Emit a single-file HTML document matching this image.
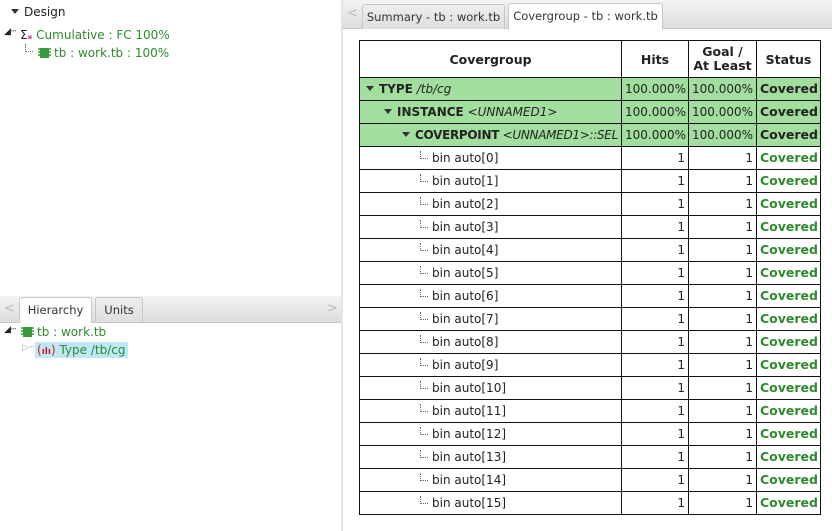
<!DOCTYPE html>
<html><head><meta charset="utf-8"><style>
*{box-sizing:border-box;margin:0;padding:0}
body{width:832px;height:531px;background:#fff;font-family:"DejaVu Sans","Liberation Sans",sans-serif;font-size:12px;color:#222;position:relative;overflow:hidden}
.a{position:absolute;white-space:nowrap}
.g{color:#2e8b2e}
.tabbar{position:absolute;background:linear-gradient(#f4f4f4,#dcdcdc);border-bottom:1px solid #c8c8c8}
.tab{position:absolute;border:1px solid #c8c8c8;border-bottom:none;border-radius:3px 3px 0 0;background:linear-gradient(#eee,#dedede);font-size:11.5px;padding-top:5px;text-align:center;color:#333}
.tab.on{background:#fff}
table{position:absolute;left:359px;top:40px;border-collapse:collapse;width:461px;table-layout:fixed}
td{border:1.5px solid #111;height:23px;padding:0 3px 1px;white-space:nowrap;overflow:hidden}
th{border:1.5px solid #111;height:37px;font-weight:bold;font-size:12.5px}
.gr td{background:#a2df9f}
.r{text-align:right}
.cov{font-weight:bold;color:#2e8b2e;font-size:12.5px}
.gr .cov{color:#222}
.tri{display:inline-block;width:0;height:0;border-left:4px solid transparent;border-right:4px solid transparent;border-top:5px solid #333;margin-right:5px;vertical-align:2px}
.dots{display:inline-block;width:8px;height:8px;border-left:1px dotted #666;border-bottom:1px dotted #666;margin-right:4px;vertical-align:1px;position:relative;top:-2px}
.chip{vertical-align:-2px;margin-right:3px}
</style></head><body>
<div class="a" style="left:11px;top:5px"><span class="tri"></span>Design</div>
<div class="a" style="left:4px;top:27px;font-size:9px">◢┄</div>
<div class="a g" style="left:20px;top:28px"><span style="color:#222">Σ</span><span style="font-size:7px;color:#c6a">▪</span> Cumulative : FC 100%</div>
<div class="a" style="left:25px;top:44px"><span class="dots"></span></div>
<div class="a g" style="left:38px;top:46px"><svg class="chip" width="13" height="12" viewBox="0 0 13 12"><rect x="2" y="1" width="9" height="10" fill="#3a9a3a"/><path d="M0 2h13M0 5h13M0 8h13" stroke="#3a9a3a" stroke-width="1.5"/></svg>tb : work.tb : 100%</div>
<div class="tabbar" style="left:0;top:296px;width:341px;height:27px"></div>
<div class="a" style="left:4px;top:301px;color:#bbb;font-size:13px">&lt;</div>
<div class="a" style="left:327px;top:301px;color:#bbb;font-size:13px">&gt;</div>
<div class="tab on" style="left:19px;top:297px;width:73px;height:26px">Hierarchy</div>
<div class="tab" style="left:95px;top:297px;width:48px;height:25px">Units</div>
<div class="a" style="left:4px;top:325px;font-size:9px">◢┄</div>
<div class="a g" style="left:21px;top:325px"><svg class="chip" width="13" height="12" viewBox="0 0 13 12"><rect x="2" y="1" width="9" height="10" fill="#3a9a3a"/><path d="M0 2h13M0 5h13M0 8h13" stroke="#3a9a3a" stroke-width="1.5"/></svg>tb : work.tb</div>
<div class="a" style="left:22px;top:343px;color:#aaa;font-size:9px">▷┄</div>
<div class="a g" style="left:35px;top:342px;background:#bfe8f6;padding:1px 3px 1px 2px"><span style="color:#c22">(</span><span style="color:#c22;font-size:9px;font-weight:bold">ılı</span><span style="color:#c22">)</span> Type /tb/cg</div>
<div class="a" style="left:341px;top:0;width:2px;height:531px;background:#e4e4e4"></div>
<div class="tabbar" style="left:343px;top:0;width:489px;height:29px"></div>
<div class="a" style="left:347px;top:6px;color:#bbb;font-size:13px">&lt;</div>
<div class="tab" style="left:362px;top:4px;width:143px;height:25px">Summary - tb : work.tb</div>
<div class="tab on" style="left:508px;top:3px;width:155px;height:27px">Covergroup - tb : work.tb</div>
<table>
<colgroup><col style="width:262px"><col style="width:67px"><col style="width:68px"><col style="width:64px"></colgroup>
<tr><th>Covergroup</th><th>Hits</th><th style="line-height:14px">Goal /<br>At Least</th><th>Status</th></tr>
<tr class="gr"><td style="padding-left:6px"><span class="tri"></span><b>TYPE</b> <i>/tb/cg</i></td><td class="r">100.000%</td><td class="r">100.000%</td><td class="cov">Covered</td></tr>
<tr class="gr"><td style="padding-left:24px"><span class="tri"></span><b>INSTANCE</b> <i>&lt;UNNAMED1&gt;</i></td><td class="r">100.000%</td><td class="r">100.000%</td><td class="cov">Covered</td></tr>
<tr class="gr"><td style="padding-left:42px;letter-spacing:-0.3px"><span class="tri"></span><b>COVERPOINT</b> <i>&lt;UNNAMED1&gt;::SEL</i></td><td class="r">100.000%</td><td class="r">100.000%</td><td class="cov">Covered</td></tr>
<tr><td style="padding-left:60px"><span class="dots"></span>bin auto[0]</td><td class="r">1</td><td class="r">1</td><td class="cov">Covered</td></tr>
<tr><td style="padding-left:60px"><span class="dots"></span>bin auto[1]</td><td class="r">1</td><td class="r">1</td><td class="cov">Covered</td></tr>
<tr><td style="padding-left:60px"><span class="dots"></span>bin auto[2]</td><td class="r">1</td><td class="r">1</td><td class="cov">Covered</td></tr>
<tr><td style="padding-left:60px"><span class="dots"></span>bin auto[3]</td><td class="r">1</td><td class="r">1</td><td class="cov">Covered</td></tr>
<tr><td style="padding-left:60px"><span class="dots"></span>bin auto[4]</td><td class="r">1</td><td class="r">1</td><td class="cov">Covered</td></tr>
<tr><td style="padding-left:60px"><span class="dots"></span>bin auto[5]</td><td class="r">1</td><td class="r">1</td><td class="cov">Covered</td></tr>
<tr><td style="padding-left:60px"><span class="dots"></span>bin auto[6]</td><td class="r">1</td><td class="r">1</td><td class="cov">Covered</td></tr>
<tr><td style="padding-left:60px"><span class="dots"></span>bin auto[7]</td><td class="r">1</td><td class="r">1</td><td class="cov">Covered</td></tr>
<tr><td style="padding-left:60px"><span class="dots"></span>bin auto[8]</td><td class="r">1</td><td class="r">1</td><td class="cov">Covered</td></tr>
<tr><td style="padding-left:60px"><span class="dots"></span>bin auto[9]</td><td class="r">1</td><td class="r">1</td><td class="cov">Covered</td></tr>
<tr><td style="padding-left:60px"><span class="dots"></span>bin auto[10]</td><td class="r">1</td><td class="r">1</td><td class="cov">Covered</td></tr>
<tr><td style="padding-left:60px"><span class="dots"></span>bin auto[11]</td><td class="r">1</td><td class="r">1</td><td class="cov">Covered</td></tr>
<tr><td style="padding-left:60px"><span class="dots"></span>bin auto[12]</td><td class="r">1</td><td class="r">1</td><td class="cov">Covered</td></tr>
<tr><td style="padding-left:60px"><span class="dots"></span>bin auto[13]</td><td class="r">1</td><td class="r">1</td><td class="cov">Covered</td></tr>
<tr><td style="padding-left:60px"><span class="dots"></span>bin auto[14]</td><td class="r">1</td><td class="r">1</td><td class="cov">Covered</td></tr>
<tr><td style="padding-left:60px"><span class="dots"></span>bin auto[15]</td><td class="r">1</td><td class="r">1</td><td class="cov">Covered</td></tr>
</table>
</body></html>
